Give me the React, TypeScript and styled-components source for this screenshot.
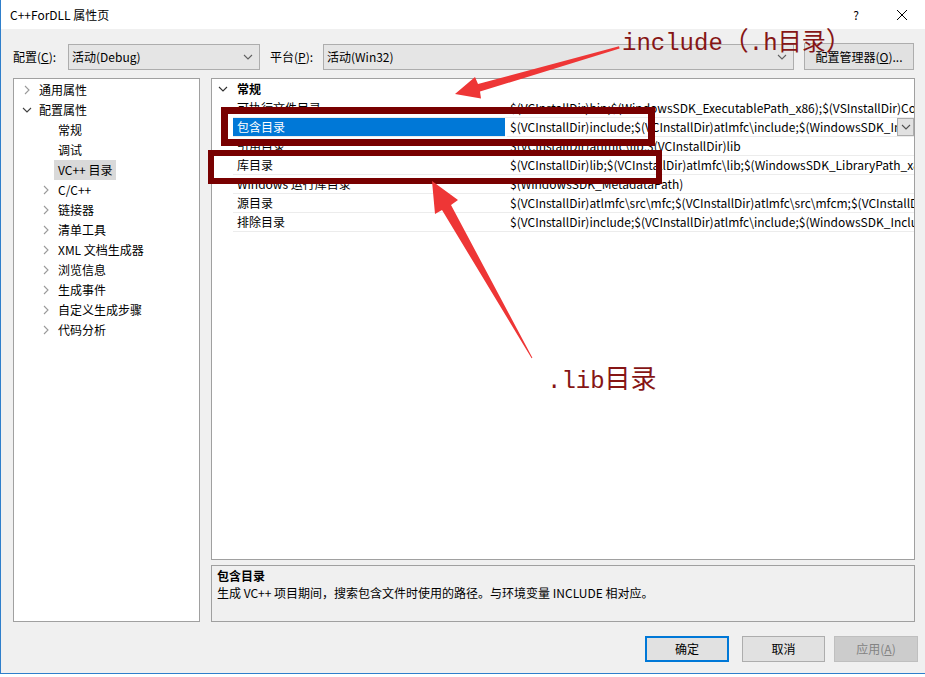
import React from "react";
import styled, { createGlobalStyle } from "styled-components";

const UI_FONT = `"Noto Sans CJK SC", "Noto Sans", sans-serif`;

const GlobalStyle = createGlobalStyle`
  html, body { margin: 0; padding: 0; background: #ffffff; }
  body { font-family: ${UI_FONT}; font-size: 12px; color: #000; }
  * { box-sizing: border-box; }
`;

const Window = styled.div`
  position: relative;
  width: 925px;
  height: 674px;
  border-left: 1px solid #2f7fcb;
  border-bottom: 1px solid #2f7fcb;
  background: #f0f0f0;
  display: flex;
  flex-direction: column;
  overflow: hidden;
  font-family: ${UI_FONT};
  font-size: 12px;
`;

const TitleBar = styled.div`
  height: 29px;
  flex: none;
  background: #ffffff;
  display: flex;
  align-items: center;
  padding-left: 9px;
`;

const Title = styled.div`
  flex: 1;
  line-height: 16px;
  color: #000;
`;

const TitleButton = styled.div`
  width: 46px;
  height: 29px;
  display: flex;
  align-items: center;
  justify-content: center;
  font-size: 12px;
  color: #000;
`;

const Body = styled.div`
  flex: 1;
  display: flex;
  flex-direction: column;
  padding: 14px 10px 0 12px;
`;

const Toolbar = styled.div`
  display: flex;
  align-items: center;
  height: 27px;
`;

const FieldLabel = styled.span<{ $w: number }>`
  width: ${(p) => p.$w}px;
  flex: none;
  line-height: 16px;
`;

const Combo = styled.div<{ $w: number; $mr: number }>`
  width: ${(p) => p.$w}px;
  margin-right: ${(p) => p.$mr}px;
  flex: none;
  height: 26px;
  border: 1px solid #adadad;
  background: #e5e5e5;
  display: flex;
  align-items: center;
  padding: 0 6px 0 3px;
`;

const ComboText = styled.span`
  flex: 1;
  line-height: 16px;
`;

const PushButton = styled.div<{ $w: number; $variant?: "default" | "normal" | "disabled" }>`
  width: ${(p) => p.$w}px;
  height: ${(p) => (p.$variant ? 26 : 27)}px;
  flex: none;
  display: flex;
  align-items: center;
  justify-content: center;
  line-height: 16px;
  background: ${(p) => (p.$variant === "disabled" ? "#cccccc" : "#e1e1e1")};
  color: ${(p) => (p.$variant === "disabled" ? "#838383" : "#000")};
  border: ${(p) =>
    p.$variant === "default"
      ? "2px solid #0078d7"
      : p.$variant === "disabled"
      ? "1px solid #bfbfbf"
      : "1px solid #adadad"};
`;

const Main = styled.div`
  display: flex;
  gap: 11px;
  margin-top: 8px;
  height: 544px;
`;

const TreePanel = styled.div`
  width: 187px;
  flex: none;
  background: #ffffff;
  border: 1px solid #a0a0a0;
  padding-top: 1px;
  display: flex;
  flex-direction: column;
`;

const TreeRow = styled.div<{ $level: number }>`
  height: 20px;
  display: flex;
  align-items: center;
  padding-left: ${(p) => 6 + 19 * p.$level}px;
`;

const TreeArrow = styled.span`
  width: 14px;
  height: 20px;
  margin-right: 5px;
  display: flex;
  align-items: center;
  justify-content: center;
  flex: none;
`;

const TreeLabel = styled.span<{ $selected?: boolean }>`
  line-height: 20px;
  padding: 0 4px;
  margin-left: -4px;
  background: ${(p) => (p.$selected ? "#d9d9d9" : "transparent")};
  white-space: nowrap;
`;

const RightCol = styled.div`
  width: 704px;
  flex: none;
  display: flex;
  flex-direction: column;
  gap: 5px;
`;

const Grid = styled.div`
  height: 482px;
  background: #ffffff;
  border: 1px solid #a0a0a0;
  display: flex;
  flex-direction: column;
  overflow: hidden;
`;

const GridHeader = styled.div`
  height: 20px;
  display: grid;
  grid-template-columns: 21px 1fr;
  align-items: center;
`;

const HeaderChevron = styled.span`
  display: flex;
  justify-content: center;
  align-items: center;
`;

const HeaderText = styled.span`
  font-weight: 700;
  padding-left: 4px;
  line-height: 16px;
`;

const GridRow = styled.div`
  height: 19px;
  display: grid;
  grid-template-columns: 21px 274px minmax(0, 1fr);
`;

const NameCell = styled.div<{ $selected?: boolean }>`
  border-bottom: 1px solid #ececec;
  padding: 0 0 0 4px;
  margin-right: ${(p) => (p.$selected ? 2 : 0)}px;
  line-height: 18px;
  white-space: nowrap;
  overflow: hidden;
  background: ${(p) => (p.$selected ? "#0078d7" : "transparent")};
  color: ${(p) => (p.$selected ? "#ffffff" : "#000")};
`;

const ValueCell = styled.div`
  border-bottom: 1px solid #ececec;
  padding-left: 3px;
  display: flex;
  align-items: stretch;
  overflow: hidden;
`;

const ValueText = styled.span`
  flex: 1;
  min-width: 0;
  line-height: 18px;
  white-space: nowrap;
  overflow: hidden;
`;

const DropButton = styled.span`
  width: 17px;
  flex: none;
  background: #e1e1e1;
  border: 1px solid #adadad;
  display: flex;
  align-items: center;
  justify-content: center;
`;

const Desc = styled.div`
  height: 57px;
  border: 1px solid #a0a0a0;
  background: #f0f0f0;
  padding: 1px 5px 0 5px;
  line-height: 17px;
`;

const DescTitle = styled.div`
  font-weight: 700;
`;

const Footer = styled.div`
  display: flex;
  justify-content: flex-end;
  margin-top: 14px;
  margin-right: -3px;
`;

const FooterGap = styled.span<{ $w: number }>`
  width: ${(p) => p.$w}px;
  flex: none;
`;

const Mn = styled.span`
  text-decoration: underline;
`;

/* ---------- annotation overlay ---------- */

const Overlay = styled.div`
  position: absolute;
  left: -1px;
  top: 0;
  width: 925px;
  height: 677px;
  pointer-events: none;
`;

const MarkBox = styled.div<{ $x: number; $y: number; $w: number; $h: number; $t: number }>`
  position: absolute;
  left: ${(p) => p.$x}px;
  top: ${(p) => p.$y}px;
  width: ${(p) => p.$w}px;
  height: ${(p) => p.$h}px;
  border: ${(p) => p.$t}px solid #780000;
`;

const NoteText = styled.div<{ $x: number; $y: number }>`
  position: absolute;
  left: ${(p) => p.$x}px;
  top: ${(p) => p.$y}px;
  font-family: "Liberation Mono", "Noto Sans CJK SC", monospace;
  font-size: 24px;
  line-height: 24px;
  color: #861515;
  white-space: nowrap;
`;

const WideGlyph = styled.span`
  font-size: 26px;
`;

const ArrowLayer = styled.svg`
  position: absolute;
  left: 0;
  top: 0;
`;

/* ---------- icons ---------- */

const ChevronDown = ({ color = "#606060", w = 8 }: { color?: string; w?: number }) => (
  <svg width={w + 2} height={w / 2 + 2} viewBox={`-1 -1 ${w + 2} ${w / 2 + 2}`}>
    <polyline points={`0,0 ${w / 2},${w / 2} ${w},0`} fill="none" stroke={color} strokeWidth="1.1" />
  </svg>
);

const ChevronRight = ({ color = "#9a9a9a" }: { color?: string }) => (
  <svg width="6" height="10" viewBox="-1 -1 6 10">
    <polyline points="0,0 4,4 0,8" fill="none" stroke={color} strokeWidth="1.1" />
  </svg>
);

const CloseIcon = () => (
  <svg width="12" height="12" viewBox="0 0 12 12">
    <line x1="1" y1="1" x2="11" y2="11" stroke="#000" strokeWidth="1" />
    <line x1="11" y1="1" x2="1" y2="11" stroke="#000" strokeWidth="1" />
  </svg>
);

/* ---------- data ---------- */

type TreeItem = { label: string; level: number; arrow?: "right" | "down"; selected?: boolean };

const treeItems: TreeItem[] = [
  { label: "通用属性", level: 0, arrow: "right" },
  { label: "配置属性", level: 0, arrow: "down" },
  { label: "常规", level: 1 },
  { label: "调试", level: 1 },
  { label: "VC++ 目录", level: 1, selected: true },
  { label: "C/C++", level: 1, arrow: "right" },
  { label: "链接器", level: 1, arrow: "right" },
  { label: "清单工具", level: 1, arrow: "right" },
  { label: "XML 文档生成器", level: 1, arrow: "right" },
  { label: "浏览信息", level: 1, arrow: "right" },
  { label: "生成事件", level: 1, arrow: "right" },
  { label: "自定义生成步骤", level: 1, arrow: "right" },
  { label: "代码分析", level: 1, arrow: "right" },
];

type Prop = { name: string; value: string; selected?: boolean };

const props: Prop[] = [
  {
    name: "可执行文件目录",
    value:
      "$(VCInstallDir)bin;$(WindowsSDK_ExecutablePath_x86);$(VSInstallDir)Common7\\Tools\\bin;$(VSInstallDir)Common7\\tools;$(VSInstallDir)Common7\\ide;",
  },
  {
    name: "包含目录",
    value: "$(VCInstallDir)include;$(VCInstallDir)atlmfc\\include;$(WindowsSDK_IncludePath);",
    selected: true,
  },
  { name: "引用目录", value: "$(VCInstallDir)atlmfc\\lib;$(VCInstallDir)lib" },
  {
    name: "库目录",
    value: "$(VCInstallDir)lib;$(VCInstallDir)atlmfc\\lib;$(WindowsSDK_LibraryPath_x86);",
  },
  { name: "Windows 运行库目录", value: "$(WindowsSDK_MetadataPath)" },
  {
    name: "源目录",
    value:
      "$(VCInstallDir)atlmfc\\src\\mfc;$(VCInstallDir)atlmfc\\src\\mfcm;$(VCInstallDir)atlmfc\\src\\atl;$(VCInstallDir)crt\\src;",
  },
  {
    name: "排除目录",
    value:
      "$(VCInstallDir)include;$(VCInstallDir)atlmfc\\include;$(WindowsSDK_IncludePath);$(MSBuild_ExecutablePath);",
  },
];

export default function App() {
  return (
    <>
      <GlobalStyle />
      <Window>
        <TitleBar>
          <Title>C++ForDLL 属性页</Title>
          <TitleButton>?</TitleButton>
          <TitleButton>
            <CloseIcon />
          </TitleButton>
        </TitleBar>

        <Body>
          <Toolbar>
            <FieldLabel $w={55}>
              配置(<Mn>C</Mn>):
            </FieldLabel>
            <Combo $w={192} $mr={10}>
              <ComboText>活动(Debug)</ComboText>
              <ChevronDown />
            </Combo>
            <FieldLabel $w={53}>
              平台(<Mn>P</Mn>):
            </FieldLabel>
            <Combo $w={471} $mr={10}>
              <ComboText>活动(Win32)</ComboText>
              <ChevronDown />
            </Combo>
            <PushButton $w={110}>
              配置管理器(<Mn>O</Mn>)...
            </PushButton>
          </Toolbar>

          <Main>
            <TreePanel>
              {treeItems.map((it) => (
                <TreeRow key={it.label} $level={it.level}>
                  <TreeArrow>
                    {it.arrow === "right" && <ChevronRight />}
                    {it.arrow === "down" && <ChevronDown color="#404040" />}
                  </TreeArrow>
                  <TreeLabel $selected={it.selected}>{it.label}</TreeLabel>
                </TreeRow>
              ))}
            </TreePanel>

            <RightCol>
              <Grid>
                <GridHeader>
                  <HeaderChevron>
                    <ChevronDown color="#303030" />
                  </HeaderChevron>
                  <HeaderText>常规</HeaderText>
                </GridHeader>
                {props.map((p) => (
                  <GridRow key={p.name}>
                    <span />
                    <NameCell $selected={p.selected}>{p.name}</NameCell>
                    <ValueCell>
                      <ValueText>{p.value}</ValueText>
                      {p.selected && (
                        <DropButton>
                          <ChevronDown color="#505050" />
                        </DropButton>
                      )}
                    </ValueCell>
                  </GridRow>
                ))}
              </Grid>
              <Desc>
                <DescTitle>包含目录</DescTitle>
                <div>生成 VC++ 项目期间，搜索包含文件时使用的路径。与环境变量 INCLUDE 相对应。</div>
              </Desc>
            </RightCol>
          </Main>

          <Footer>
            <PushButton $w={84} $variant="default">
              确定
            </PushButton>
            <FooterGap $w={13} />
            <PushButton $w={83} $variant="normal">
              取消
            </PushButton>
            <FooterGap $w={9} />
            <PushButton $w={84} $variant="disabled">
              应用(<Mn>A</Mn>)
            </PushButton>
          </Footer>
        </Body>

        <Overlay>
          <MarkBox $x={221} $y={107} $w={434} $h={39} $t={7} />
          <MarkBox $x={208} $y={150} $w={454} $h={34} $t={6.5} />
          <ArrowLayer width="925" height="677" viewBox="0 0 925 677">
            <polygon
              points="455,94 475,77 478,84 619,46.3 619.6,48.6 480,91.5 481,98.5"
              fill="#ee3636"
            />
            <polygon
              points="432,181 458,200 451,205 532.4,357.8 531.6,358.3 442,210 435,214"
              fill="#ee3636"
            />
          </ArrowLayer>
          <NoteText $x={622} $y={31}>
            include<WideGlyph>（</WideGlyph>.h目录<WideGlyph>）</WideGlyph>
          </NoteText>
          <NoteText $x={547} $y={369}>
            .lib<WideGlyph>目录</WideGlyph>
          </NoteText>
        </Overlay>
      </Window>
    </>
  );
}
